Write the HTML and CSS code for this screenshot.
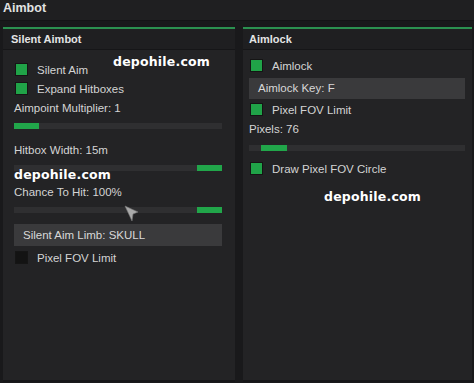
FILE: index.html
```html
<html lang="en">
<head>
  <meta charset="UTF-8">
  <title>Aimbot</title>
  <link rel="stylesheet" href="styles.css">
</head>
<body>

  <div class="titlebar">Aimbot</div>

  <div class="columns">
    <!-- Painel esquerdo -->
    <div class="panel panel-left">
      <div class="panel-head">Silent Aimbot</div>
      <div class="panel-body">
        <div class="row"><span class="check on"></span>Silent Aim</div>
        <div class="row"><span class="check on"></span>Expand Hitboxes</div>
        <div class="row">Aimpoint Multiplier: 1</div>
        <div class="slider"><div class="fill" style="margin-left: 0; width: 25px"></div></div>
        <div class="row">Hitbox Width: 15m</div>
        <div class="slider"><div class="fill" style="margin-left: 183px; width: 25px"></div></div>
        <div class="row">Chance To Hit: 100%</div>
        <div class="slider"><div class="fill" style="margin-left: 183px; width: 25px"></div></div>
        <div class="bar">Silent Aim Limb: SKULL</div>
        <div class="row"><span class="check"></span>Pixel FOV Limit</div>
      </div>
    </div>

    <!-- Painel direito -->
    <div class="panel panel-right">
      <div class="panel-head">Aimlock</div>
      <div class="panel-body">
        <div class="row"><span class="check on"></span>Aimlock</div>
        <div class="bar">Aimlock Key: F</div>
        <div class="row"><span class="check on"></span>Pixel FOV Limit</div>
        <div class="row">Pixels: 76</div>
        <div class="slider"><div class="fill" style="margin-left: 12px; width: 26px"></div></div>
        <div class="row"><span class="check on"></span>Draw Pixel FOV Circle</div>
      </div>
    </div>
  </div>

  <div class="mark mark-1">depohile.com</div>
  <div class="mark mark-2">depohile.com</div>
  <div class="mark mark-3">depohile.com</div>

  <svg class="cursor" width="16" height="18" viewBox="0 0 16 18">
    <polygon points="1,1 14,7 9,9 8,16" fill="#a9a9a9" stroke="#777" stroke-width="0.6"/>
  </svg>

</body>
</html>
```
FILE: styles.css
```css
body {
  margin: 0;
  height: 383px;
  overflow: hidden;
  background: #19191b;
  font-family: 'Liberation Sans', Arial, sans-serif;
  font-size: 11.5px;
  color: #d4d4d4;
  position: relative;
}

.titlebar {
  height: 20px;
  line-height: 17px;
  padding-left: 3px;
  background: #1f1f21;
  font-size: 12.5px;
  font-weight: bold;
  color: #e2e2e2;
  border-bottom: 1px solid #141416;
}

.columns {
  display: flex;
  gap: 8px;
  padding: 6px 2px 0 3px;
}

.panel {
  height: 351px;
  border-top: 2px solid #2b9150;
  background: #232325;
  box-shadow: 0 2px 0 #161618;
}
.panel-left { width: 232px; }
.panel-right { flex: 1; }

.panel-head {
  height: 20px;
  line-height: 20px;
  background: #1f1f21;
  border-bottom: 1px solid #161618;
  font-weight: bold;
  font-size: 11px;
  color: #e4e4e4;
  padding-left: 8px;
}
.panel-right .panel-head { padding-left: 6px; }

.panel-left .panel-body { padding: 10px 13px 0 11px; }
.panel-right .panel-body { padding: 6px 7px 0 6px; }

.row {
  height: 19px;
  display: flex;
  align-items: center;
  white-space: nowrap;
}

.check {
  width: 11px;
  height: 11px;
  border: 1px solid #151515;
  background: #131313;
  margin: 0 9px 0 1px;
}
.check.on {
  background: #20a348;
}

.slider {
  height: 6px;
  margin: 6px 0 11px;
  background: #2f2f31;
}
.panel-right .slider { margin: 7px 0 8px; }
.fill {
  height: 6px;
  background: #21a64a;
}

.bar {
  height: 22px;
  line-height: 22px;
  background: #3a3a3c;
  padding-left: 9px;
  color: #d8d8d8;
  margin: 1px 0 2px;
}
.panel-right .bar {
  height: 21px;
  line-height: 21px;
  margin: 3px 0 1px;
}

/* marca d'agua */
.mark {
  position: absolute;
  font-family: 'DejaVu Sans', sans-serif;
  font-weight: bold;
  font-size: 12.5px;
  color: #ffffff;
  letter-spacing: 0.2px;
}
.mark-1 { left: 113px; top: 54px; }
.mark-2 { left: 14px; top: 167px; }
.mark-3 { left: 324px; top: 189px; }

.cursor {
  position: absolute;
  left: 124px;
  top: 205px;
}
```
